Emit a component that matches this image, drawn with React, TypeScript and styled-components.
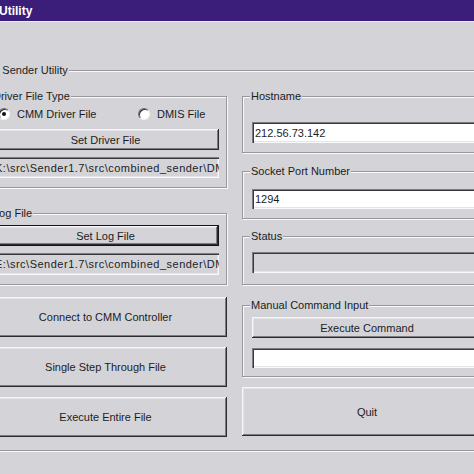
import styled, { createGlobalStyle } from 'styled-components';

const FACE = '#d4d4d8';

const GlobalStyle = createGlobalStyle`
  html, body {
    margin: 0;
    padding: 0;
    background: ${FACE};
    overflow: hidden;
  }

  body {
    font-family: "Liberation Sans", Arial, sans-serif;
    font-size: 11px;
    color: #1c1c1e;
  }
`;

function App() {
  return (
    <>
      <GlobalStyle />
      <StyledWindow>
        <StyledTitleBar>Utility</StyledTitleBar>
        <StyledBody>
          <StyledGroup>
            <StyledLegend $offset={1}>CMM Sender Utility</StyledLegend>
            <StyledOuterContent>
              <StyledColumn>
                <StyledGroup>
                  <StyledLegend>Driver File Type</StyledLegend>
                  <StyledGroupContent $pad="4px 7px 9px">
                    <StyledRadioRow>
                      <StyledRadio>
                        <StyledRadioCircle $checked />
                        CMM Driver File
                      </StyledRadio>
                      <StyledRadio>
                        <StyledRadioCircle />
                        DMIS File
                      </StyledRadio>
                    </StyledRadioRow>
                    <StyledButton $height={21} style={{ marginTop: 8 }}>
                      Set Driver File
                    </StyledButton>
                    <StyledField $height={21} $readOnly $path style={{ marginTop: 7 }}>
                      K:\src\Sender1.7\src\combined_sender\DMIS_files
                    </StyledField>
                  </StyledGroupContent>
                </StyledGroup>

                <StyledGroup $top={18}>
                  <StyledLegend>Log File</StyledLegend>
                  <StyledGroupContent $pad="5px 7px 9px">
                    <StyledButton $height={21} $focused>
                      Set Log File
                    </StyledButton>
                    <StyledField $height={22} $readOnly $path style={{ marginTop: 7 }}>
                      E:\src\Sender1.7\src\combined_sender\DMIS_log.txt
                    </StyledField>
                  </StyledGroupContent>
                </StyledGroup>

                <StyledActionList>
                  <StyledButton $height={40}>Connect to CMM Controller</StyledButton>
                  <StyledButton $height={40}>Single Step Through File</StyledButton>
                  <StyledButton $height={40}>Execute Entire File</StyledButton>
                </StyledActionList>
              </StyledColumn>

              <StyledColumn>
                <StyledGroup>
                  <StyledLegend>Hostname</StyledLegend>
                  <StyledGroupContent $pad="19px 9px 9px">
                    <StyledField $height={21}>212.56.73.142</StyledField>
                  </StyledGroupContent>
                </StyledGroup>

                <StyledGroup $top={11}>
                  <StyledLegend>Socket Port Number</StyledLegend>
                  <StyledGroupContent $pad="11px 9px 9px">
                    <StyledField $height={20}>1294</StyledField>
                  </StyledGroupContent>
                </StyledGroup>

                <StyledGroup $top={10}>
                  <StyledLegend>Status</StyledLegend>
                  <StyledGroupContent $pad="9px 9px 11px">
                    <StyledField $height={21} $readOnly />
                  </StyledGroupContent>
                </StyledGroup>

                <StyledGroup $top={13}>
                  <StyledLegend>Manual Command Input</StyledLegend>
                  <StyledGroupContent $pad="5px 9px 8px">
                    <StyledButton $height={21}>Execute Command</StyledButton>
                    <StyledField $height={20} style={{ marginTop: 10 }} />
                  </StyledGroupContent>
                </StyledGroup>

                <StyledButton $height={49} style={{ marginTop: 10 }}>
                  Quit
                </StyledButton>
              </StyledColumn>
            </StyledOuterContent>
          </StyledGroup>
        </StyledBody>
      </StyledWindow>
    </>
  );
}

export default App;

const StyledWindow = styled.div`
  width: 540px;
  height: 474px;
  margin-left: -40px;

  display: flex;
  flex-direction: column;

  background: ${FACE};
`;

const StyledTitleBar = styled.div`
  height: 21px;
  padding-left: 39px;

  display: flex;
  align-items: center;

  background: #3b1e7a;
  border-bottom: 1px solid #ececf0;
  color: #ffffff;
  font-size: 12px;
  font-weight: bold;
`;

const StyledBody = styled.div`
  padding: 41px 0 0 10px;
`;

const StyledGroup = styled.fieldset<{ $top?: number }>`
  min-width: 0;
  margin: ${({ $top }) => $top ?? 0}px 0 0;
  padding: 0;

  border: 1px solid #98989c;
  box-shadow: inset 1px 1px #fafafc, 1px 1px #fafafc;
`;

const StyledLegend = styled.legend<{ $offset?: number }>`
  margin-left: ${({ $offset }) => $offset ?? 7}px;
  padding: 0 1px;

  background: ${FACE};
  line-height: 14px;
`;

const StyledOuterContent = styled.div`
  padding: 12px 12px 13px 13px;

  display: grid;
  grid-template-columns: 243px 250px;
  column-gap: 15px;
`;

const StyledColumn = styled.div`
  display: flex;
  flex-direction: column;
`;

const StyledGroupContent = styled.div<{ $pad: string }>`
  padding: ${({ $pad }) => $pad};

  display: flex;
  flex-direction: column;
`;

const StyledRadioRow = styled.div`
  height: 14px;
  padding-left: 6px;

  display: grid;
  grid-template-columns: 140px auto;
  align-items: center;
`;

const StyledRadio = styled.label`
  display: flex;
  align-items: center;
  gap: 7px;
`;

const StyledRadioCircle = styled.span<{ $checked?: boolean }>`
  position: relative;
  width: 12px;
  height: 12px;
  box-sizing: border-box;

  border-radius: 50%;
  background: #ffffff;
  border: 1px solid;
  border-color: #6c6c70 #f4f4f6 #f4f4f6 #6c6c70;
  box-shadow: inset 1px 1px #303032;

  &::after {
    content: '';
    display: ${({ $checked }) => ($checked ? 'block' : 'none')};
    position: absolute;
    left: 3px;
    top: 3px;
    width: 4px;
    height: 4px;
    border-radius: 50%;
    background: #111111;
  }
`;

const StyledButton = styled.button<{ $height: number; $focused?: boolean }>`
  height: ${({ $height }) => $height}px;
  width: 100%;
  padding: 0;

  display: flex;
  align-items: center;
  justify-content: center;

  background: ${FACE};
  border: ${({ $focused }) => ($focused ? '1px solid #151517' : 'none')};
  box-shadow:
    inset -1px -1px #2c2c2e,
    inset 1px 1px #f6f6f8,
    inset -2px -2px #7c7c80,
    inset 2px 2px #e4e4e8;
  color: #1c1c1e;
  font-family: inherit;
  font-size: 11px;
`;

const StyledField = styled.div<{ $height: number; $readOnly?: boolean; $path?: boolean }>`
  height: ${({ $height }) => $height}px;
  padding: 0 3px;
  box-sizing: border-box;
  overflow: hidden;

  display: flex;
  align-items: center;

  background: ${({ $readOnly }) => ($readOnly ? FACE : '#ffffff')};
  box-shadow:
    inset 1px 1px #7c7c80,
    inset 2px 2px #3a3a3c,
    inset -1px -1px #fafafc,
    inset -2px -2px #e4e4e8;
  letter-spacing: ${({ $path }) => ($path ? '0.5px' : 'normal')};
  white-space: nowrap;
`;

const StyledActionList = styled.div`
  margin-top: 12px;

  display: flex;
  flex-direction: column;
  gap: 10px;
`;
